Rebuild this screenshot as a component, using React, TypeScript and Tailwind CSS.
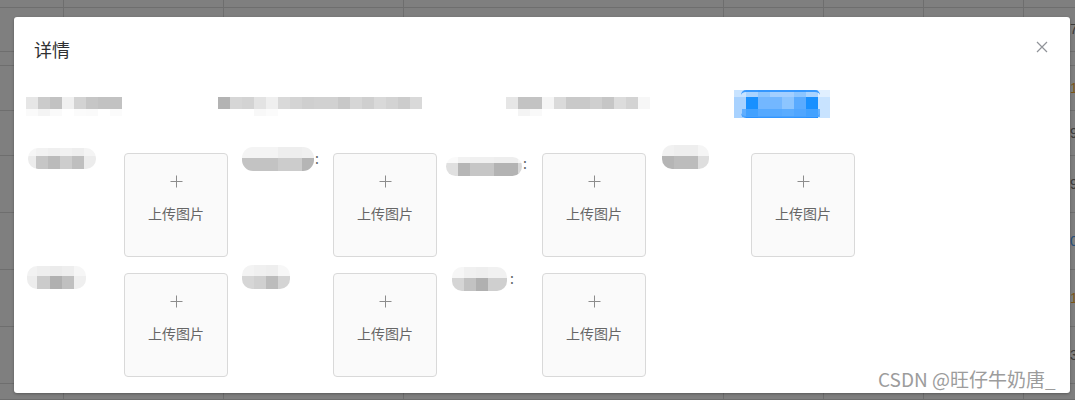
import React from "react";

type Blk = [number, string];

function Mosaic({
  top,
  main,
  topH,
  mainH,
  className = "",
}: {
  top: Blk[];
  main: Blk[];
  topH: number;
  mainH: number;
  className?: string;
}) {
  return (
    <div className={"flex flex-col overflow-hidden " + className}>
      <div className="flex" style={{ height: topH }}>
        {top.map(([w, c], i) => (
          <div key={i} style={{ width: w, background: c }} />
        ))}
      </div>
      <div className="flex" style={{ height: mainH }}>
        {main.map(([w, c], i) => (
          <div key={i} style={{ width: w, background: c }} />
        ))}
      </div>
    </div>
  );
}

function UploadCard() {
  return (
    <div className="mt-[8px] flex h-[104px] w-[104px] shrink-0 flex-col items-center rounded-[4px] border border-[#d9d9d9] bg-[#fafafa] pt-[21px]">
      <svg width="13" height="13" viewBox="0 0 13 13" className="block">
        <path d="M6.5 0.5V12.5M0.5 6.5H12.5" stroke="#8c8c8c" strokeWidth="1" fill="none" />
      </svg>
      <div className="mt-[14px] text-[14px] leading-[22px] text-[#666666]">上传图片</div>
    </div>
  );
}

function Colon() {
  return <span className="text-[14px] leading-[14px] text-[#606266]">:</span>;
}

function Cell({ label }: { label?: React.ReactNode }) {
  return (
    <div className="flex w-[209px] shrink-0">
      <div className="relative w-[98px] shrink-0">{label}</div>
      <UploadCard />
    </div>
  );
}

const bgRows: { h: number; text?: string; color?: string }[] = [
  { h: 8 },
  { h: 44, text: "7", color: "#3a3a3a" },
  { h: 14 },
  { h: 45, text: "1", color: "#7a5518" },
  { h: 45, text: "9", color: "#3a3a3a" },
  { h: 57, text: "9", color: "#3a3a3a" },
  { h: 57, text: "0", color: "#264f7a" },
  { h: 57, text: "1", color: "#7a5518" },
  { h: 57, text: "3", color: "#3a3a3a" },
  { h: 16 },
];
const colW = [64, 160, 180, 320, 100, 100, 100, 51];

export default function App() {
  return (
    <div
      className="relative h-[400px] w-[1075px] overflow-hidden bg-[#7f7f7f]"
      style={{ fontFamily: '"Noto Sans CJK SC", "Noto Sans", sans-serif' }}
    >
      {/* background table under mask */}
      <div className="flex flex-col">
        {bgRows.map((r, i) => (
          <div key={i} className="flex border-b border-[#6e6e6e]" style={{ height: r.h }}>
            {colW.map((w, j) => (
              <div
                key={j}
                className={
                  "flex items-center overflow-hidden " +
                  (j < colW.length - 1 ? "border-r border-[#6e6e6e]" : "")
                }
                style={{ width: w }}
              >
                {j === colW.length - 1 && r.text ? (
                  <span
                    className="pl-[46px] text-[14px]"
                    style={{ color: r.color, fontFamily: '"Liberation Sans", sans-serif' }}
                  >
                    {r.text}
                  </span>
                ) : null}
              </div>
            ))}
          </div>
        ))}
      </div>

      {/* dialog */}
      <div className="absolute left-[14px] top-[17px] h-[376px] w-[1056px] rounded-[3px] bg-white shadow-[0_1px_3px_rgba(0,0,0,0.3)]">
        <div className="relative px-[20px] pb-[10px] pt-[20px]">
          <div className="text-[18px] leading-[24px] text-[#303133]">详情</div>
          <svg
            width="12"
            height="12"
            viewBox="0 0 12 12"
            className="absolute right-[22px] top-[24px]"
          >
            <path d="M1 1L11 11M11 1L1 11" stroke="#909399" strokeWidth="1.2" fill="none" />
          </svg>
        </div>

        <div className="pl-[12px] pt-[19px]">
          {/* top info row */}
          <div className="flex h-[28px] items-start">
            <Mosaic
              className="mt-[7px] w-[96px]"
              topH={12}
              mainH={7}
              top={[
                [12, "#e6e6e6"],
                [12, "#cbcbcb"],
                [12, "#c2c2c2"],
                [12, "#f0f0f0"],
                [12, "#d3d3d3"],
                [12, "#c6c6c6"],
                [12, "#c2c2c2"],
                [12, "#c2c2c2"],
              ]}
              main={[
                [12, "#fafafa"],
                [12, "#f4f4f4"],
                [12, "#fafafa"],
                [12, "#ffffff"],
                [12, "#fbfbfb"],
                [12, "#fafafa"],
                [12, "#ffffff"],
                [12, "#fbfbfb"],
              ]}
            />
            <Mosaic
              className="ml-[96px] mt-[7px] w-[204px]"
              topH={12}
              mainH={7}
              top={[
                [12, "#b3b3b3"],
                [12, "#d6d6d6"],
                [12, "#d3d3d3"],
                [12, "#e3e3e3"],
                [12, "#efefef"],
                [12, "#d9d9d9"],
                [12, "#d4d4d4"],
                [12, "#cfcfcf"],
                [12, "#d1d1d1"],
                [12, "#d1d1d1"],
                [12, "#c8c8c8"],
                [12, "#d6d6d6"],
                [12, "#cfcfcf"],
                [12, "#d9d9d9"],
                [12, "#d3d3d3"],
                [12, "#cccccc"],
                [12, "#d9d9d9"],
              ]}
              main={[
                [36, "#ffffff"],
                [12, "#f8f8f8"],
                [12, "#fbfbfb"],
                [144, "#ffffff"],
              ]}
            />
            <Mosaic
              className="ml-[84px] mt-[7px] w-[144px]"
              topH={12}
              mainH={7}
              top={[
                [12, "#e6e6e6"],
                [12, "#c3c3c3"],
                [12, "#c3c3c3"],
                [12, "#f5f5f5"],
                [12, "#dadada"],
                [12, "#c9c9c9"],
                [12, "#c9c9c9"],
                [12, "#cfcfcf"],
                [12, "#c6c6c6"],
                [12, "#dcdcdc"],
                [12, "#d3d3d3"],
                [12, "#f7f7f7"],
              ]}
              main={[
                [12, "#ffffff"],
                [12, "#f4f4f4"],
                [12, "#f9f9f9"],
                [108, "#ffffff"],
              ]}
            />
            <div className="relative ml-[84px] h-[28px] w-[96px]">
              <Mosaic
                className="h-[28px] w-[96px]"
                topH={7}
                mainH={21}
                top={[
                  [12, "#c8e3ff"],
                  [12, "#a9d3ff"],
                  [12, "#8cc5ff"],
                  [12, "#a3cfff"],
                  [12, "#a3cfff"],
                  [12, "#8cc5ff"],
                  [12, "#a9d3ff"],
                  [12, "#e0efff"],
                ]}
                main={[
                  [12, "#a8d2ff"],
                  [12, "#1890ff"],
                  [12, "#73b7ff"],
                  [12, "#73b7ff"],
                  [12, "#8cc5ff"],
                  [12, "#5aabff"],
                  [12, "#1890ff"],
                  [12, "#c8e3ff"],
                ]}
              />
              <div className="absolute left-[7px] top-0 h-[28px] w-[79px] rounded-[5px] border-y-2 border-[#2b93ff] opacity-90" />
              <div className="absolute left-[8px] top-[19px] h-[8px] w-[78px] bg-[#4da5ff] opacity-80" />
            </div>
          </div>

          {/* upload grid */}
          <div className="mt-[27px] flex flex-col gap-[8px]">
            <div className="flex">
              <Cell
                label={
                  <Mosaic
                    className="ml-[2px] mt-[3px] w-[68px] rounded-[10px]"
                    topH={8}
                    mainH={13}
                    top={[
                      [8, "#f6f6f6"],
                      [12, "#f2f2f2"],
                      [12, "#efefef"],
                      [12, "#f1f1f1"],
                      [12, "#eeeeee"],
                      [12, "#f4f4f4"],
                    ]}
                    main={[
                      [8, "#ececec"],
                      [12, "#c6c6c6"],
                      [12, "#bbbbbb"],
                      [12, "#cdcdcd"],
                      [12, "#bfbfbf"],
                      [12, "#ececec"],
                    ]}
                  />
                }
              />
              <Cell
                label={
                  <div className="ml-[7px] flex items-end">
                    <Mosaic
                      className="w-[72px] rounded-[11px]"
                      topH={11}
                      mainH={13}
                      top={[
                        [36, "#f4f4f4"],
                        [24, "#eeeeee"],
                        [12, "#f0f0f0"],
                      ]}
                      main={[
                        [36, "#c3c3c3"],
                        [24, "#cccccc"],
                        [12, "#b5b5b5"],
                      ]}
                    />
                    <span className="ml-[1px] mb-[2px]">
                      <Colon />
                    </span>
                  </div>
                }
              />
              <Cell
                label={
                  <div className="ml-[2px] mt-[5px] flex items-end">
                    <Mosaic
                      className="w-[76px] rounded-[10px]"
                      topH={6}
                      mainH={13}
                      top={[
                        [12, "#fafafa"],
                        [12, "#f2f2f2"],
                        [24, "#f0f0f0"],
                        [24, "#eeeeee"],
                        [4, "#f6f6f6"],
                      ]}
                      main={[
                        [12, "#e0e0e0"],
                        [12, "#b6b6b6"],
                        [24, "#c6c6c6"],
                        [24, "#b3b3b3"],
                        [4, "#d8d8d8"],
                      ]}
                    />
                    <span className="ml-[1px] mb-[2px]">
                      <Colon />
                    </span>
                  </div>
                }
              />
              <Cell
                label={
                  <Mosaic
                    className="ml-[9px] w-[47px] rounded-[10px]"
                    topH={11}
                    mainH={13}
                    top={[
                      [12, "#f1f1f1"],
                      [24, "#eeeeee"],
                      [11, "#f5f5f5"],
                    ]}
                    main={[
                      [12, "#b5b5b5"],
                      [24, "#bcbcbc"],
                      [11, "#dedede"],
                    ]}
                  />
                }
              />
            </div>
            <div className="flex">
              <Cell
                label={
                  <Mosaic
                    className="ml-[1px] mt-[1px] w-[59px] rounded-[10px]"
                    topH={10}
                    mainH={13}
                    top={[
                      [10, "#f2f2f2"],
                      [13, "#eeeeee"],
                      [12, "#ebebeb"],
                      [12, "#eeeeee"],
                      [12, "#f6f6f6"],
                    ]}
                    main={[
                      [10, "#ededed"],
                      [13, "#cbcbcb"],
                      [12, "#b0b0b0"],
                      [12, "#c0c0c0"],
                      [12, "#efefef"],
                    ]}
                  />
                }
              />
              <Cell
                label={
                  <Mosaic
                    className="ml-[7px] w-[48px] rounded-[10px]"
                    topH={11}
                    mainH={13}
                    top={[
                      [12, "#f3f3f3"],
                      [12, "#f0f0f0"],
                      [12, "#eeeeee"],
                      [12, "#f7f7f7"],
                    ]}
                    main={[
                      [12, "#d6d6d6"],
                      [12, "#d0d0d0"],
                      [12, "#bcbcbc"],
                      [12, "#d4d4d4"],
                    ]}
                  />
                }
              />
              <Cell
                label={
                  <div className="ml-[8px] flex items-end">
                    <Mosaic
                      className="w-[55px] rounded-[10px]"
                      topH={11}
                      mainH={13}
                      top={[
                        [12, "#f6f6f6"],
                        [12, "#f0f0f0"],
                        [12, "#eeeeee"],
                        [19, "#f1f1f1"],
                      ]}
                      main={[
                        [12, "#d5d5d5"],
                        [12, "#c2c2c2"],
                        [12, "#b0b0b0"],
                        [19, "#cfcfcf"],
                      ]}
                    />
                    <span className="ml-[3px] mb-[2px]">
                      <Colon />
                    </span>
                  </div>
                }
              />
            </div>
          </div>
        </div>
      </div>

      {/* watermark */}
      <div
        className="absolute left-[878px] top-[366px] whitespace-nowrap text-[19px] leading-[26px] text-[#9c9c9c]"
        style={{ textShadow: "0 0 1px #ffffff" }}
      >
        CSDN @旺仔牛奶唐_
      </div>
    </div>
  );
}
